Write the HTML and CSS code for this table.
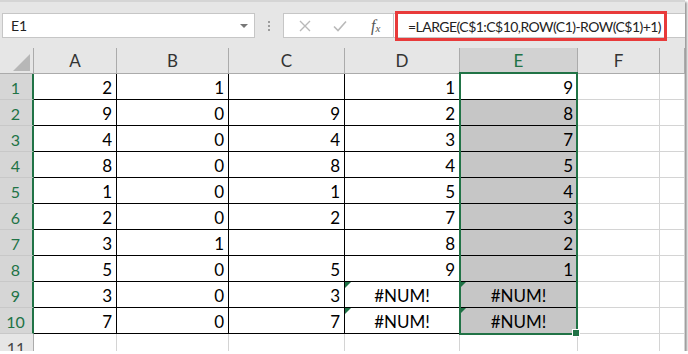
FILE: index.html
```html
<!DOCTYPE html>
<html lang="en">
<head>
  <meta charset="UTF-8" />
  <title>LARGE formula</title>
  <link rel="stylesheet" href="styles.css">
</head>
<body>
  <div class="window">
    <div class="toolbar">
      <div class="namebox">
        <span>E1</span>
        <span class="caret"></span>
      </div>
      <div class="dots"><i></i><i></i><i></i></div>
      <div class="buttons">
        <svg width="12" height="12" viewBox="0 0 12 12"><path d="M1 1 L11 11 M11 1 L1 11" stroke="#b9b9b9" stroke-width="1.4" fill="none"/></svg>
        <svg width="14" height="12" viewBox="0 0 14 12"><path d="M1 6.5 L5 10.5 L13 1.5" stroke="#b9b9b9" stroke-width="1.6" fill="none"/></svg>
        <span class="fx">f<sub>x</sub></span>
      </div>
      <div class="formula">
        <div class="mark">=LARGE(C$1:C$10,ROW(C1)-ROW(C$1)+1)</div>
      </div>
    </div>

    <div class="sheet">
      <div class="corner"><span></span></div>
      <div class="hd">A</div>
      <div class="hd">B</div>
      <div class="hd">C</div>
      <div class="hd">D</div>
      <div class="hd sel">E</div>
      <div class="hd">F</div>
      <div class="hd"></div>

      <div class="rh sel">1</div>
      <div class="c b">2</div><div class="c b">1</div><div class="c b"></div><div class="c b">1</div><div class="c b">9</div>
      <div class="c"></div><div class="c"></div>

      <div class="rh sel">2</div>
      <div class="c b">9</div><div class="c b">0</div><div class="c b">9</div><div class="c b">2</div><div class="c b g">8</div>
      <div class="c"></div><div class="c"></div>

      <div class="rh sel">3</div>
      <div class="c b">4</div><div class="c b">0</div><div class="c b">4</div><div class="c b">3</div><div class="c b g">7</div>
      <div class="c"></div><div class="c"></div>

      <div class="rh sel">4</div>
      <div class="c b">8</div><div class="c b">0</div><div class="c b">8</div><div class="c b">4</div><div class="c b g">5</div>
      <div class="c"></div><div class="c"></div>

      <div class="rh sel">5</div>
      <div class="c b">1</div><div class="c b">0</div><div class="c b">1</div><div class="c b">5</div><div class="c b g">4</div>
      <div class="c"></div><div class="c"></div>

      <div class="rh sel">6</div>
      <div class="c b">2</div><div class="c b">0</div><div class="c b">2</div><div class="c b">7</div><div class="c b g">3</div>
      <div class="c"></div><div class="c"></div>

      <div class="rh sel">7</div>
      <div class="c b">3</div><div class="c b">1</div><div class="c b"></div><div class="c b">8</div><div class="c b g">2</div>
      <div class="c"></div><div class="c"></div>

      <div class="rh sel">8</div>
      <div class="c b">5</div><div class="c b">0</div><div class="c b">5</div><div class="c b">9</div><div class="c b g">1</div>
      <div class="c"></div><div class="c"></div>

      <div class="rh sel">9</div>
      <div class="c b">3</div><div class="c b">0</div><div class="c b">3</div><div class="c b err">#NUM!</div><div class="c b g err">#NUM!</div>
      <div class="c"></div><div class="c"></div>

      <div class="rh sel">10</div>
      <div class="c b">7</div><div class="c b">0</div><div class="c b">7</div><div class="c b err">#NUM!</div><div class="c b g err">#NUM!</div>
      <div class="c"></div><div class="c"></div>

      <div class="rh">11</div>
      <div class="c"></div><div class="c"></div><div class="c"></div><div class="c"></div><div class="c"></div>
      <div class="c"></div><div class="c"></div>

      <div class="selection"><span class="handle"></span></div>
    </div>
  </div>
</body>
</html>
```

FILE: styles.css
```css
body {
  margin: 0;
  background-color: #fff;
  font-family: Lato, 'Open Sans', sans-serif;
  color: #000;
}

.window {
  width: 685px;
  height: 351px;
  overflow: hidden;
  background-color: #fff;
  box-shadow: 2px 2px 2px #9a9a9a;
}

/* formula bar */
.toolbar {
  display: flex;
  align-items: flex-start;
  height: 46px;
  background-color: #e6e6e6;
  border-top: 2px solid #d5d5d5;
}

.namebox {
  display: flex;
  align-items: center;
  justify-content: space-between;
  width: 253px;
  height: 25px;
  margin: 11px 0 0 2px;
  padding: 0 6px 0 8px;
  box-sizing: border-box;
  background-color: #fff;
  border: 1px solid #c6c6c6;
  font-size: 14px;
  color: #222;
}

.caret {
  width: 0;
  height: 0;
  border-left: 4px solid transparent;
  border-right: 4px solid transparent;
  border-top: 4px solid #777;
}

.dots {
  display: flex;
  flex-direction: column;
  gap: 2px;
  margin: 19px 13px 0 13px;
}

.dots i {
  display: block;
  width: 2px;
  height: 2px;
  background-color: #9c9c9c;
}

.buttons {
  display: flex;
  align-items: center;
  gap: 22px;
  width: 111px;
  height: 25px;
  margin-top: 11px;
  padding-left: 15px;
  box-sizing: border-box;
  background-color: #fff;
  border: 1px solid #c6c6c6;
}

.fx {
  font-family: 'Liberation Serif', serif;
  font-style: italic;
  font-size: 16px;
  color: #555;
  margin-left: 2px;
}

.fx sub {
  font-size: 11px;
  vertical-align: -1px;
}

.formula {
  position: relative;
  flex: 1;
  height: 25px;
  margin-top: 11px;
  background-color: #fff;
  border-top: 1px solid #c6c6c6;
  border-bottom: 1px solid #c6c6c6;
  box-sizing: border-box;
}

.mark {
  position: absolute;
  left: 1px;
  top: -3px;
  width: 272px;
  height: 30px;
  box-sizing: border-box;
  border: 3px solid #e83a3a;
  padding-left: 10px;
  font-size: 14px;
  letter-spacing: -0.55px;
  line-height: 25px;
  color: #222;
  white-space: nowrap;
}

/* grid */
.sheet {
  position: relative;
  display: grid;
  grid-template-columns: 34px 83px 112px 116px 115px 118px 82px 1fr;
  grid-auto-rows: 26px;
}

.sheet > div {
  box-sizing: border-box;
}

.corner {
  position: relative;
  background-color: #e6e6e6;
  border-right: 1px solid #ababab;
  border-bottom: 1px solid #ababab;
}

.corner span {
  position: absolute;
  right: 3px;
  bottom: 2px;
  width: 0;
  height: 0;
  border-left: 17px solid transparent;
  border-bottom: 17px solid #b7b7b7;
}

.hd {
  background-color: #e6e6e6;
  border-right: 1px solid #ababab;
  border-bottom: 1px solid #ababab;
  text-align: center;
  font-size: 17px;
  line-height: 26px;
  color: #333;
}

.hd.sel {
  background-color: #d2d2d2;
  color: #217346;
  border-bottom: 2px solid #217346;
}

.rh {
  background-color: #e6e6e6;
  border-right: 1px solid #ababab;
  border-bottom: 1px solid #c8c8c8;
  text-align: center;
  font-size: 16px;
  line-height: 27px;
  color: #444;
  padding-right: 1px;
}

.rh.sel {
  background-color: #d6d6d6;
  color: #217346;
  border-right: 2px solid #217346;
}

.c {
  position: relative;
  background-color: #fff;
  border-right: 1px solid #d4d4d4;
  border-bottom: 1px solid #d4d4d4;
  text-align: right;
  padding-right: 4px;
  font-size: 17px;
  line-height: 27px;
}

.c.b {
  border-right-color: #000;
  border-bottom-color: #000;
}

.c.g {
  background-color: #c6c6c6;
}

.c.err {
  text-align: center;
  padding-right: 0;
}

.c.err::before {
  content: "";
  position: absolute;
  left: 0;
  top: 0;
  border-top: 6px solid #1e7145;
  border-right: 6px solid transparent;
}

/* green outline of the selected range E1:E10 */
.selection {
  position: absolute;
  left: 459px;
  top: 24px;
  width: 119px;
  height: 263px;
  border: 2px solid #217346;
  pointer-events: none;
}

.handle {
  position: absolute;
  right: -4px;
  bottom: -4px;
  width: 6px;
  height: 6px;
  background-color: #217346;
  border: 1px solid #fff;
}
```
